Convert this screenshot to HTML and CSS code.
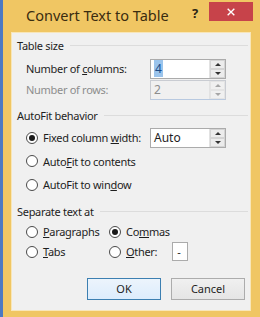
FILE: index.html
```html
<!DOCTYPE html>
<html lang="en">
<head>
    <meta charset="UTF-8">
    <title>Convert Text to Table</title>
    <link rel="stylesheet" href="styles.css">
</head>
<body>
    <div class="window">
        <div class="titlebar">
            <span class="title">Convert Text to Table</span>
            <span class="help">?</span>
            <span class="close">
                <svg width="12" height="12" viewBox="0 0 12 12"><path d="M2 2 L10 10 M10 2 L2 10" stroke="#fff" stroke-width="1.6"/></svg>
            </span>
        </div>
        <div class="panel">
            <div class="group-head first"><span>Table size</span></div>
            <div class="row cols">
                <span class="label"><span>Number of <u>c</u>olumns:</span></span>
                <div class="spin">
                    <span class="value"><span class="sel">4</span></span>
                    <span class="arrows"><i class="up"></i><i class="down"></i></span>
                </div>
            </div>
            <div class="row disabled">
                <span class="label"><span>Number of rows:</span></span>
                <div class="spin">
                    <span class="value">2</span>
                    <span class="arrows"><i class="up"></i><i class="down"></i></span>
                </div>
            </div>

            <div class="group-head autofit"><span>AutoFit behavior</span></div>
            <div class="row radio-row fixed">
                <span class="label"><span class="radio on"></span><span>Fixed column <u>w</u>idth:</span></span>
                <div class="spin">
                    <span class="value">Auto</span>
                    <span class="arrows"><i class="up"></i><i class="down"></i></span>
                </div>
            </div>
            <div class="row radio-row">
                <span class="label"><span class="radio"></span><span>Auto<u>F</u>it to contents</span></span>
            </div>
            <div class="row radio-row">
                <span class="label"><span class="radio"></span><span>AutoFit to win<u>d</u>ow</span></span>
            </div>

            <div class="group-head separate"><span>Separate text at</span></div>
            <div class="sep-grid">
                <span class="label"><span class="radio"></span><span><u>P</u>aragraphs</span></span>
                <span class="label"><span class="radio on"></span><span>Co<u>m</u>mas</span></span>
                <span class="label"><span class="radio"></span><span><u>T</u>abs</span></span>
                <span class="label"><span class="radio"></span><span><u>O</u>ther:</span><span class="other">-</span></span>
            </div>

            <div class="buttons">
                <button class="btn default">OK</button>
                <button class="btn">Cancel</button>
            </div>
        </div>
    </div>
</body>
</html>
```

FILE: styles.css
```css
body {
    margin: 0;
    font-family: 'Noto Sans', sans-serif;
    font-size: 11px;
    letter-spacing: -0.3px;
    color: #1e1e1e;
}

.window {
    width: 260px;
    height: 317px;
    box-sizing: border-box;
    background: #f0c663;
    border-left: 3px solid #4c79c2;
    display: flex;
    flex-direction: column;
}

.titlebar {
    height: 32px;
    flex-shrink: 0;
    position: relative;
}

.title {
    display: block;
    margin: 5px 0 0 23px;
    font-size: 14.5px;
    letter-spacing: 0;
    color: #3a2c10;
}

.help {
    position: absolute;
    left: 189px;
    top: 4px;
    font-size: 13px;
    font-weight: bold;
    color: #2b2413;
}

.close {
    position: absolute;
    left: 206px;
    top: 2px;
    width: 44px;
    height: 19px;
    background: #c7434a;
    display: flex;
    align-items: center;
    justify-content: center;
}

.close svg {
    width: 10px;
    height: 10px;
}

.panel {
    flex: 1;
    margin: 0 9px 6px 8px;
    background: #f0f0f0;
    border: 1px solid #f8e6b8;
    padding: 4px 0 0 5px;
}

.group-head {
    display: flex;
    align-items: center;
    gap: 6px;
    height: 16px;
}

.group-head::after {
    content: '';
    flex: 1;
    height: 1px;
    background: #dcdcdc;
    margin-right: 2px;
}

.group-head.autofit {
    margin-top: 7px;
}

.group-head.separate {
    margin-top: 7px;
}

.row {
    display: flex;
    align-items: center;
    justify-content: space-between;
    padding-left: 9px;
    padding-right: 24px;
    height: 21px;
}

.row.cols {
    margin-top: 5px;
}

.disabled {
    color: #8d8d8d;
}

.label {
    display: flex;
    align-items: center;
    white-space: nowrap;
}

.spin {
    width: 76px;
    height: 20px;
    box-sizing: border-box;
    border: 1px solid #ababab;
    background: #fff;
    display: flex;
}

.disabled .spin {
    background: #f0f0f0;
    border-color: #c9ccd2;
    border-bottom-color: #b8c9e0;
}

.value {
    flex: 1;
    padding-left: 3px;
    line-height: 17px;
    font-size: 12px;
    letter-spacing: 0;
}

.sel {
    background: #9bc4ec;
    color: #1a4a86;
    padding: 0 1px;
}

.arrows {
    width: 15px;
    display: flex;
    flex-direction: column;
    border-left: 1px solid #e2e2e2;
}

.arrows i {
    flex: 1;
    background: #ececec;
    border: 1px solid #d4d4d4;
    position: relative;
}

.arrows i::after {
    content: '';
    position: absolute;
    left: 4px;
    top: 2px;
    border-left: 3px solid transparent;
    border-right: 3px solid transparent;
}

.arrows .up::after {
    border-bottom: 3px solid #333;
}

.arrows .down::after {
    border-top: 3px solid #333;
}

.disabled .arrows i {
    background: #f0f0f0;
    border-color: #e4e4e4;
}

.disabled .arrows .up::after {
    border-bottom-color: #a6a6a6;
}

.disabled .arrows .down::after {
    border-top-color: #a6a6a6;
}

.radio {
    width: 12px;
    height: 12px;
    box-sizing: border-box;
    border: 1px solid #4a4a4a;
    border-radius: 50%;
    background: #fff;
    margin-right: 5px;
    position: relative;
    flex-shrink: 0;
}

.radio.on::after {
    content: '';
    position: absolute;
    left: 2px;
    top: 2px;
    width: 6px;
    height: 6px;
    border-radius: 50%;
    background: #1a1a1a;
}

.radio-row {
    height: 23.5px;
}

.radio-row.fixed {
    margin-top: 3px;
}

.sep-grid {
    display: grid;
    grid-template-columns: 83px auto;
    padding-left: 9px;
    margin-top: 2px;
}

.sep-grid .label {
    height: 20px;
}

.other {
    display: inline-block;
    width: 16px;
    height: 19px;
    box-sizing: border-box;
    border: 1px solid #ababab;
    background: #fff;
    margin-left: 15px;
    padding-left: 4px;
    line-height: 17px;
}

.buttons {
    display: flex;
    justify-content: flex-end;
    gap: 10px;
    padding-right: 5px;
    margin-top: 16px;
}

.btn {
    width: 74px;
    height: 22px;
    font-family: 'Noto Sans', sans-serif;
    font-size: 11px;
    color: #1e1e1e;
    background: linear-gradient(#f0f0f0, #e5e5e5);
    border: 1px solid #acacac;
    padding: 0;
}

.btn.default {
    border-color: #3c7fb1;
    background: linear-gradient(#ecf4fc, #dcecfc);
}
```
